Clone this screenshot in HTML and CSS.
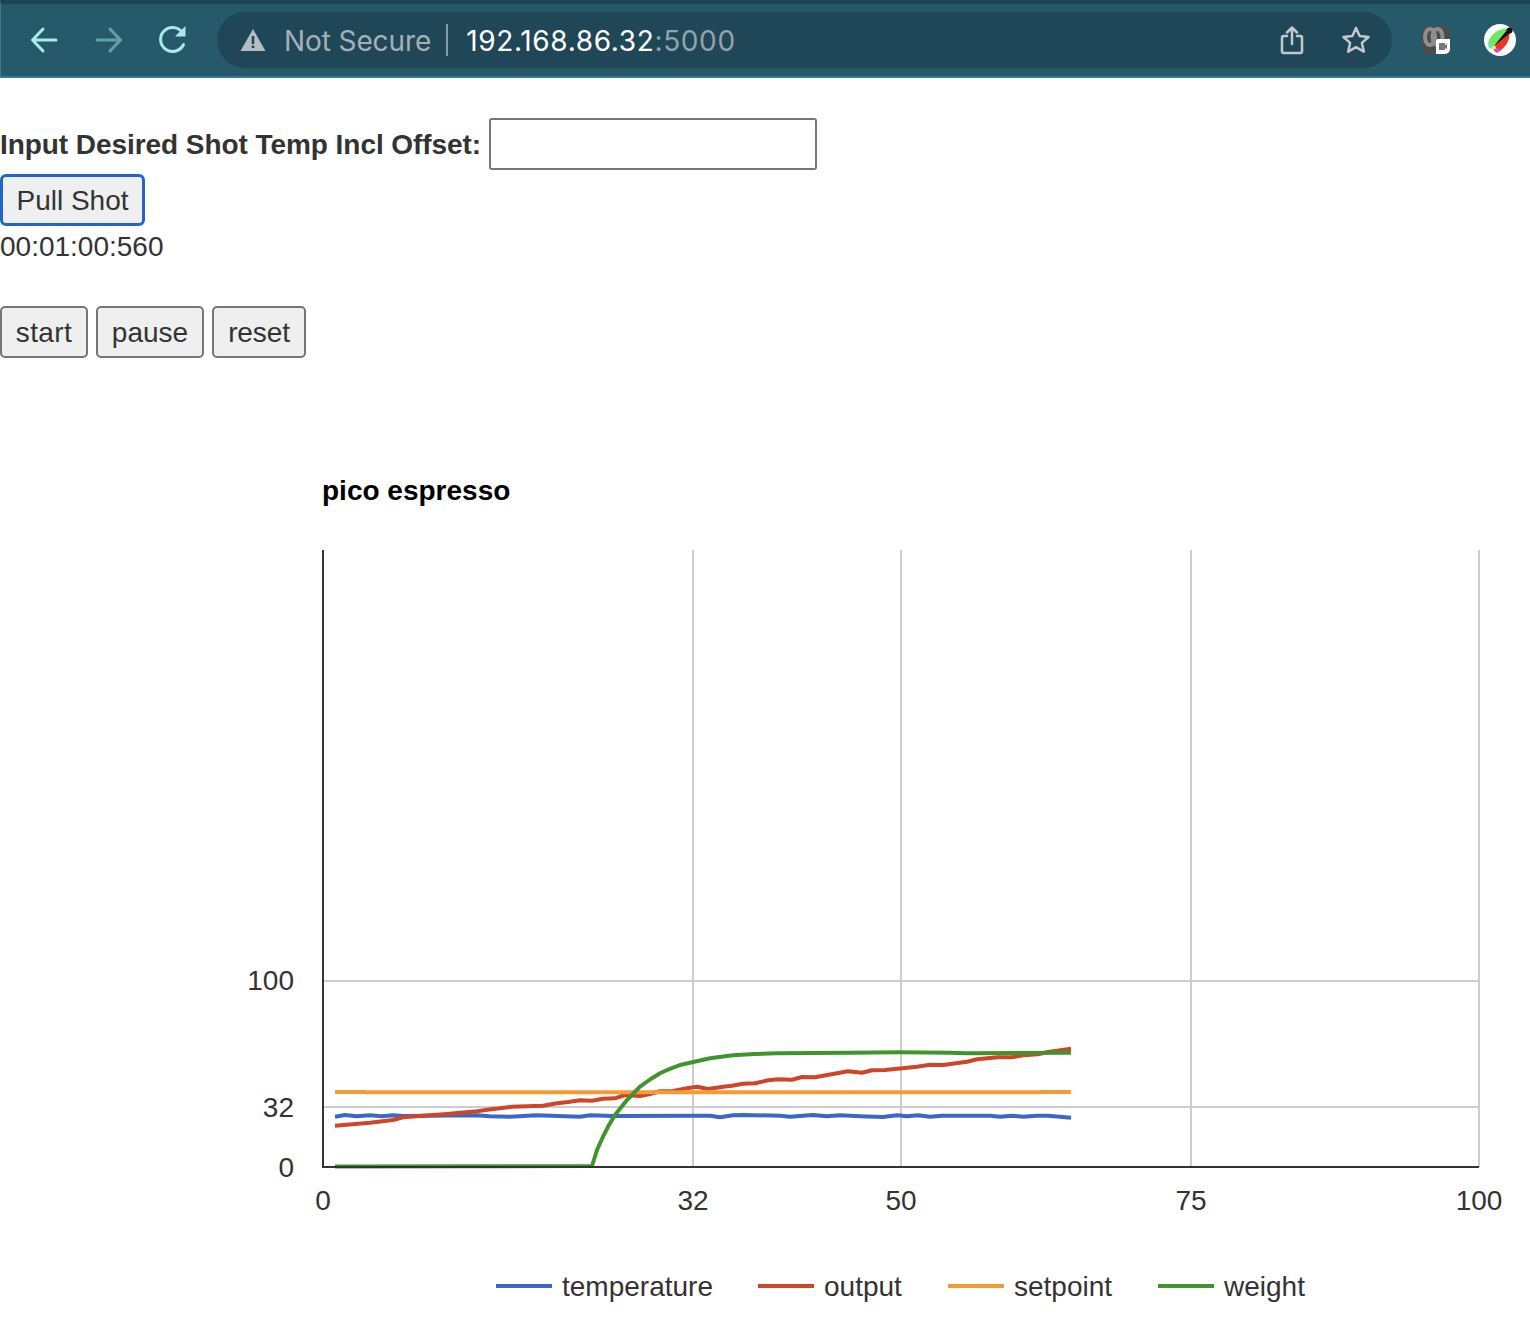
FILE: index.html
```
<!DOCTYPE html>
<html lang="en">
<head>
<meta charset="utf-8">
<title>pico espresso</title>
<link rel="stylesheet" href="styles.css">
</head>
<body>
<header class="toolbar">
  <nav class="nav">
    <svg class="nav-icon" viewBox="0 0 32 32"><path class="ico-back" d="M27 16H4M14 5 3.500 16 14 27"/></svg>
    <svg class="nav-icon" viewBox="0 0 32 32"><path class="ico-fwd" d="M4 16h23M17 5l10.500 11L17 27"/></svg>
    <svg class="nav-icon" viewBox="0 0 32 32"><path class="ico-back" d="M26.500 20.500A12 12 0 1 1 25 8"/><path class="ico-fill" d="M18 12.500H28.500V2Z"/></svg>
  </nav>
  <div class="addr">
    <svg class="warn" viewBox="0 0 26 24"><path class="warn-tri" d="M13 1 25.500 23H.5Z"/><path class="warn-mark" d="M11.700 8h2.600v8h-2.600zM11.700 17.500h2.600V20h-2.600z"/></svg>
    <span class="secure">Not Secure</span>
    <span class="sep"></span>
    <span class="url">192.168.86.32<span class="port">:5000</span></span>
    <span class="addr-space"></span>
    <svg class="share" viewBox="0 0 24 30"><path class="ico-line" d="M7 11H3.500A1.500 1.500 0 0 0 2 12.500v14A1.500 1.500 0 0 0 3.500 28h17a1.500 1.500 0 0 0 1.500-1.500v-14a1.500 1.500 0 0 0-1.500-1.500H17M12 19V2.500M7 7.500l5-5 5 5"/></svg>
    <svg class="star" viewBox="0 0 30 30"><path class="ico-line" d="M15 3l3.600 8 8.900 1-6.600 5.900 1.900 8.700-7.800-4.500-7.800 4.500 1.900-8.700L2.500 12l8.900-1z"/></svg>
  </div>
  <div class="ext">
    <svg class="ext-icon" viewBox="0 0 28 28"><rect class="ext-bg" width="28" height="28" rx="5"/><ellipse class="ext-ring" cx="8" cy="11" rx="5" ry="8"/><ellipse class="ext-ring" cx="15.500" cy="11" rx="5" ry="8"/><path class="ext-badge" d="M16 13h12v10a5 5 0 0 1-5 5H14V15a2 2 0 0 1 2-2z"/><path class="ext-cam" d="M17 17h6v2l2-1v5l-2-1v2h-6z"/></svg>
  </div>
  <div class="ext ext-last">
    <svg class="ext-logo" viewBox="0 0 32 32"><circle class="logo-bg" cx="16" cy="16" r="16"/><path class="logo-green" d="M4 19C7 9 15 4 25 5L9 23Z"/><path class="logo-cyan" d="M4 19 9 23 7 25C5 24 4 22 4 19Z"/><path class="logo-red" d="M25 6C27 14 23 23 14 28L9 23Z"/><path class="logo-yel" d="M7 24 11 21 13 26 9 26Z"/><path class="logo-mag" d="M9 26 13 24 17 26 13 29Z"/><path class="logo-blk" d="M10 22 23 6 26 9Z"/><circle class="logo-blk" cx="25.500" cy="6.500" r="3"/></svg>
  </div>
</header>
<main class="page">
  <div class="field-row">
    <label class="field-label" for="temp">Input Desired Shot Temp Incl Offset:</label>
    <input id="temp" class="field-input" type="text">
  </div>
  <div class="pull-row"><button class="btn btn-focus" type="button">Pull Shot</button></div>
  <div class="timer">00:01:00:560</div>
  <div class="btn-row">
    <button class="btn btn-start" type="button">start</button>
    <button class="btn btn-pause" type="button">pause</button>
    <button class="btn btn-reset" type="button">reset</button>
  </div>
  <svg class="chart" viewBox="0 0 1530 900" width="1530" height="900">
    <g transform="translate(0,-444)">
      <text class="chart-title" x="322" y="500">pico espresso</text>
      <path class="grid" d="M693 550V1167M901 550V1167M1191 550V1167M1479 550V1167M323 981H1479M323 1107H1479"/>
      <polyline class="ln ln-blue" points="335,1116.700 345,1115 356.700,1116.300 370,1115.300 381.700,1116.300 393,1115.300 403,1116 476.700,1115.300 490,1116.300 510,1116.700 536.700,1115.300 580,1116.700 590,1115.300 613,1116 700,1115.700 710,1115.700 720,1117.300 733,1115.300 743,1115 780,1115.700 790,1116.700 813,1115 826.700,1116.300 840,1115.300 860,1116.300 883,1117 897,1115.300 907,1116.300 918,1115.300 930,1116.700 942,1115.700 990,1115.700 1000,1116.700 1012,1115.700 1023,1116.700 1037,1115.700 1048,1115.700 1071,1117.700"/>
      <polyline class="ln ln-red" points="335,1125.700 370,1122.700 393,1120 403,1117.300 447,1114 477,1111.300 487,1109.700 500,1108.300 512,1106.700 543,1105.700 557,1103.300 568,1102 580,1100.300 592,1100.700 603,1098.700 615,1098.300 625,1095 640,1096 650,1094 660,1091.300 673,1091 687,1088.300 697,1086.700 708,1089 723,1086.700 732,1085.700 743,1083.700 755,1083.300 768,1080.300 778,1079.300 792,1079.700 802,1077 815,1077.300 848,1071.300 862,1072.700 872,1070.300 885,1070 917,1066.700 930,1064.700 943,1065 967,1061.700 977,1059.300 998,1057.300 1012,1057.300 1023,1055.300 1038,1054.300 1048,1052 1071,1048.700"/>
      <polyline class="ln ln-orange" points="335,1092 365,1092 366,1092.300 1040,1092.300 1041,1092 1071,1092"/>
      <polyline class="ln ln-green" points="335,1166.500 592,1166 597,1150 603,1136.700 609,1125 615,1115 627,1100 640,1086.700 650,1079.500 660,1073.300 670,1068.800 680,1065 690,1062.700 710,1058.300 733,1055.300 755,1054 777,1053.300 850,1052.700 900,1052.300 950,1052.700 967,1053.300 1071,1052.700"/>
      <path class="axis" d="M323 550V1168M322 1167H1479"/>
      <text class="tick end" x="294" y="990">100</text>
      <text class="tick end" x="294" y="1117">32</text>
      <text class="tick end" x="294" y="1177">0</text>
      <text class="tick mid" x="323" y="1210">0</text>
      <text class="tick mid" x="693" y="1210">32</text>
      <text class="tick mid" x="901" y="1210">50</text>
      <text class="tick mid" x="1191" y="1210">75</text>
      <text class="tick mid" x="1479" y="1210">100</text>
      <path class="ln-blue key" d="M496 1286h56"/>
      <text class="tick" x="562" y="1296">temperature</text>
      <path class="ln-red key" d="M758 1286h56"/>
      <text class="tick" x="824" y="1296">output</text>
      <path class="ln-orange key" d="M948 1286h56"/>
      <text class="tick" x="1014" y="1296">setpoint</text>
      <path class="ln-green key" d="M1158 1286h56"/>
      <text class="tick" x="1224" y="1296">weight</text>
    </g>
  </svg>
</main>
</body>
</html>
```
FILE: styles.css
```
* { box-sizing: border-box; }
html, body { margin: 0; padding: 0; background: #fff; }
body { font-family: "Liberation Sans", Arial, sans-serif; color: #333; font-size: 28px; overflow: hidden; }

.toolbar {
  height: 78px;
  display: flex;
  align-items: center;
  background: #265a6b;
  border-top: 4px solid #1c4552;
  border-bottom: 2px solid #3e7b88;
  border-left: 1px solid #3e7b88;
  padding: 4px 0 0 0;
}
.nav { display: flex; gap: 32px; padding-left: 28px; width: 216px; align-items: center; margin-top: -4px; }
.nav-icon { width: 32px; height: 32px; flex: none; }
.ico-back, .ico-fwd { fill: none; stroke-width: 3; stroke-linecap: round; stroke-linejoin: round; }
.ico-back { stroke: #a8ece9; }
.ico-fwd { stroke: #62a2a6; }
.ico-fill { fill: #a8ece9; }
.addr {
  width: 1175px;
  height: 56px;
  margin-top: -4px;
  border-radius: 28px;
  background: #1f4757;
  display: flex;
  align-items: center;
  padding-left: 23px;
}
.warn { width: 26px; height: 24px; flex: none; }
.warn-tri { fill: #b5bcc2; }
.warn-mark { fill: #1f4757; }
.secure { margin-left: 18px; padding-top: 2px; font-family: Inter, sans-serif; font-size: 28px; letter-spacing: -.1px; color: #a6b0b7; }
.sep { width: 2px; height: 32px; background: #8a9aa3; margin: 0 18px 0 15px; }
.url { padding-top: 2px; font-family: Inter, sans-serif; font-size: 28px; letter-spacing: .65px; color: #fff; }
.port { color: #93a3ab; }
.addr-space { flex: 1; }
.share { width: 24px; height: 30px; flex: none; }
.star { width: 30px; height: 30px; flex: none; margin: 0 21px 0 37px; }
.ico-line { fill: none; stroke: #c3c9cc; stroke-width: 2.500; stroke-linejoin: round; stroke-linecap: round; }
.ext { width: 28px; height: 28px; margin-left: 30px; margin-top: -4px; display: flex; }
.ext-last { width: 32px; height: 32px; margin-left: 34px; }
.ext-icon, .ext-logo { width: 100%; height: 100%; display: block; }
.ext-bg { fill: #4c4c4c; }
.ext-ring { fill: none; stroke: #8e8e8e; stroke-width: 4; }
.ext-badge { fill: #fff; }
.ext-cam { fill: #777; }
.logo-bg { fill: #fff; }
.logo-green { fill: #6ee860; }
.logo-cyan { fill: #4fe3dc; }
.logo-red { fill: #e8352a; }
.logo-mag { fill: #e040d0; }
.logo-yel { fill: #f4ee50; }
.logo-blk { fill: #111; }

.page { display: flex; flex-direction: column; }
.field-row { display: flex; align-items: center; gap: 8px; margin-top: 40px; height: 52px; }
.field-label { font-weight: 700; font-size: 28px; letter-spacing: -.06px; padding-top: 2px; }
.field-input { width: 328px; height: 52px; border: 2px solid #767676; border-radius: 3px; background: #fff; }
.pull-row { margin-top: 4px; height: 52px; }
.btn {
  font-family: "Liberation Sans", Arial, sans-serif;
  font-size: 28px;
  color: #333;
  height: 52px;
  padding: 2px 0 0;
  background: #efefef;
  border: 2px solid #767676;
  border-radius: 5px;
}
.btn-focus { width: 145px; border: 3px solid #2463c9; border-radius: 6px; }
.btn-start { width: 88px; letter-spacing: .4px; }
.btn-pause { width: 108px; }
.btn-reset { width: 94px; letter-spacing: -.1px; }
.timer { height: 42px; line-height: 42px; }
.btn-row { display: flex; gap: 8px; margin-top: 38px; height: 52px; }
.chart { display: block; margin-top: 86px; }
.chart-title { font-family: "Liberation Sans", Arial, sans-serif; font-weight: 700; font-size: 28px; fill: #000; }
.grid { fill: none; stroke: #ccc; stroke-width: 2; }
.axis { fill: none; stroke: #333; stroke-width: 2; }
.ln { fill: none; stroke-width: 4; stroke-linejoin: round; }
.ln-blue { stroke: #3c67c8; }
.ln-red { stroke: #cf4527; }
.ln-orange { stroke: #f59b33; }
.ln-green { stroke: #41942b; }
.key { fill: none; stroke-width: 4; }
.tick { font-family: "Liberation Sans", Arial, sans-serif; font-size: 28px; fill: #333; }
.end { text-anchor: end; }
.mid { text-anchor: middle; }
```
